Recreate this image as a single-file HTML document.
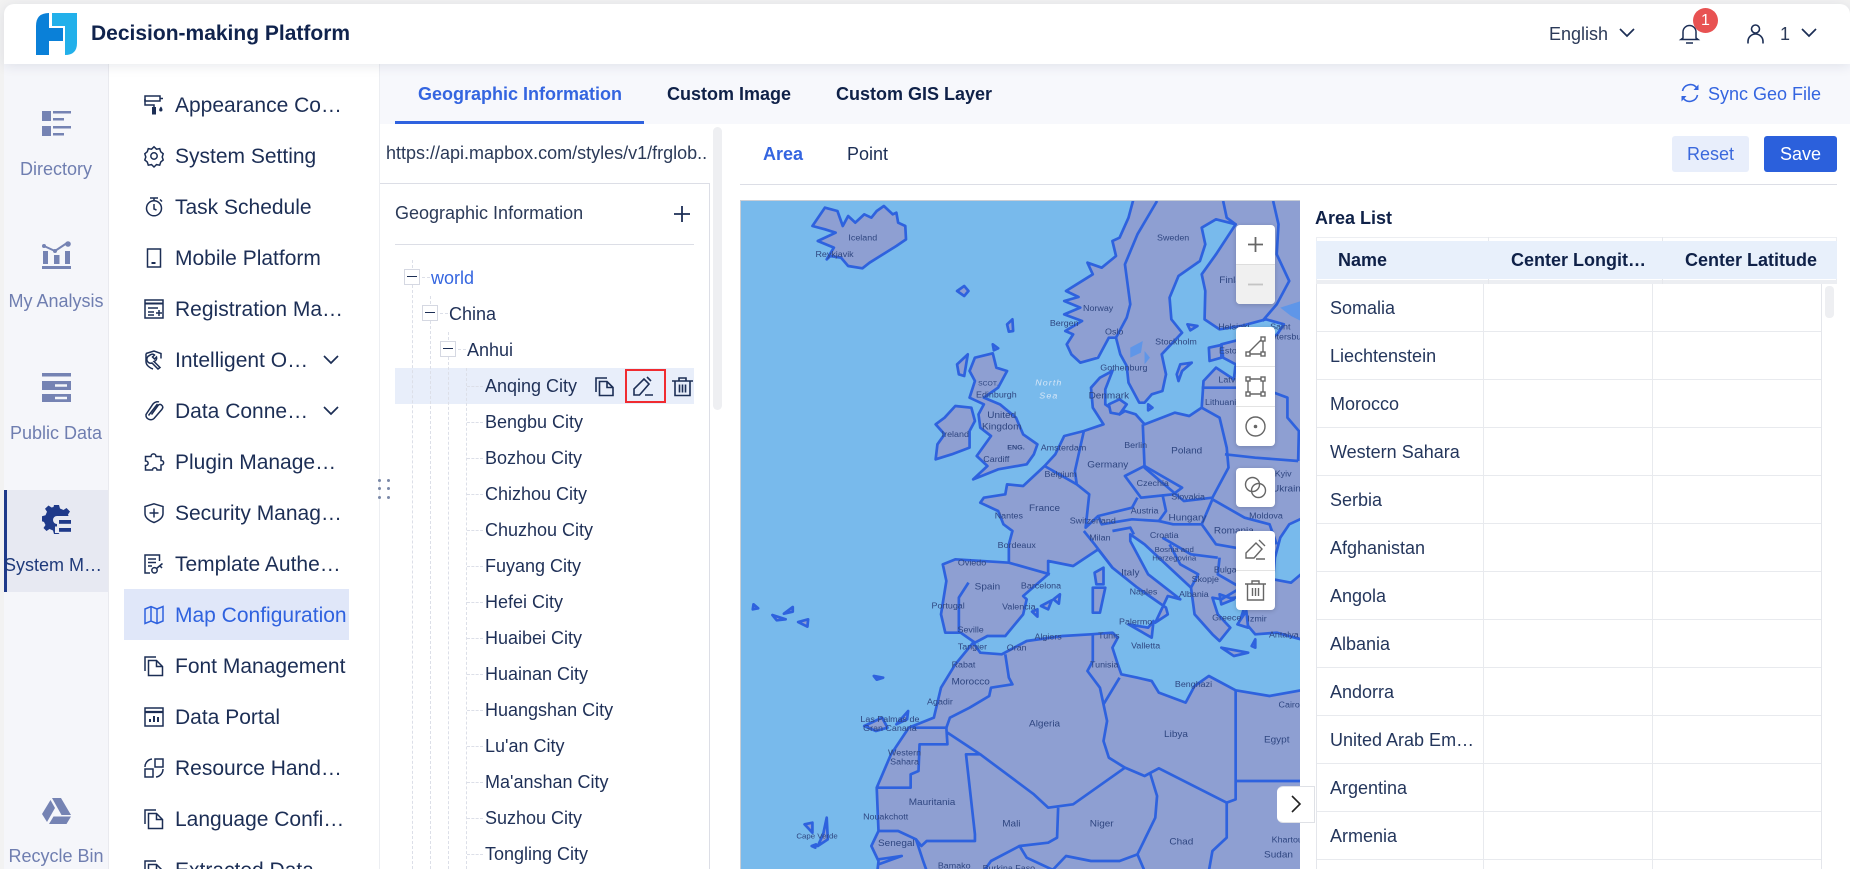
<!DOCTYPE html>
<html lang="en"><head><meta charset="utf-8"><title>Decision-making Platform</title>
<style>
html,body{margin:0;padding:0;width:1850px;height:869px;overflow:hidden;background:#f2f2f2;font-family:"Liberation Sans",Arial,sans-serif;color:#1c2e55}
*{box-sizing:border-box}
#root{position:relative;width:1850px;height:869px;overflow:hidden}
.a{position:absolute}
.t{position:absolute;white-space:nowrap;line-height:24px;height:24px;transform:translateY(-12px)}
.s{font-size:21px;left:175px;color:#1c2e55}
.r{font-size:18px;color:#6f7eb0;left:4px;width:104px;text-align:center}
.n{font-size:18px;color:#1f3057}
.c{font-size:18px;color:#24365c;left:1330px}
.b{font-weight:bold;font-size:18px;color:#0f2148}
svg{position:absolute;overflow:visible;display:block}
.i{left:144px;width:20px;height:20px;fill:none;stroke:#1c2e55;stroke-width:1.5}
.ln{fill:none;stroke:#2e62de;stroke-width:2.7;stroke-linejoin:round}
.ln path{vector-effect:non-scaling-stroke}
.mp text{font-family:"Liberation Sans",Arial,sans-serif;font-size:25px;fill:#2f4680;text-anchor:middle}
.ctl{position:absolute;left:1236px;width:39px;background:#fff;border-radius:4px;box-shadow:0 1px 5px rgba(0,0,0,.18)}
.ctl svg{left:8px;width:23px;height:23px;fill:none;stroke:#666;stroke-width:1.4}
.v{position:absolute;width:0;border-left:1.5px dashed #dcdfe8}
.h{position:absolute;height:0;border-top:1.5px dashed #dcdfe8}
.bx{position:absolute;width:16px;height:16px;border:1.5px solid #d5d8e2;background:#fff}
.bx:after{content:"";position:absolute;left:2px;right:2px;top:5.5px;height:1.5px;background:#1c2e55}
</style></head><body>
<div id="root">

<!-- header -->
<div class="a" style="left:4px;top:4px;width:1846px;height:60px;background:#fff;border-radius:10px 10px 0 0;z-index:5;box-shadow:0 2px 12px rgba(30,40,80,.10)"></div>
<svg style="left:36px;top:13px;width:42px;height:42px;z-index:6" viewBox="0 0 42 42">
<path d="M13 0Q0 0 0 13V42H13V28H27V15H13Z" fill="#0a80d8"/>
<path d="M16 0H41V30Q41 42 29 42V13H16Z" fill="#22b0ea"/>
</svg>
<div class="t" style="left:91px;top:34px;font-size:21px;font-weight:bold;color:#10234d;z-index:6">Decision-making Platform</div>
<div class="t" style="left:1549px;top:34px;font-size:18px;color:#2b3a58;z-index:6">English</div>
<svg style="left:1619px;top:28px;width:16px;height:10px;z-index:6;fill:none;stroke:#1c2e55;stroke-width:1.7" viewBox="0 0 16 10"><path d="M1 1l7 7 7-7"/></svg>
<svg style="left:1680px;top:24px;width:19px;height:20px;z-index:6;fill:none;stroke:#1c2e55;stroke-width:1.5" viewBox="0 0 19 20"><path d="M3 14V8a6.500 6.500 0 0 1 13 0v6l2 1.500H1zM6 19h7"/></svg>
<div class="a" style="left:1693px;top:8px;width:25px;height:25px;border-radius:50%;background:#e85252;color:#fff;font-size:16px;line-height:25px;text-align:center;z-index:7">1</div>
<svg style="left:1747px;top:24px;width:17px;height:20px;z-index:6;fill:none;stroke:#1c2e55;stroke-width:1.6" viewBox="0 0 17 20"><circle cx="8.500" cy="5" r="4"/><path d="M1 19.500v-2a7.500 7.500 0 0 1 15 0v2"/></svg>
<div class="t" style="left:1780px;top:34px;font-size:18px;color:#2b3a58;z-index:6">1</div>
<svg style="left:1801px;top:28px;width:16px;height:10px;z-index:6;fill:none;stroke:#1c2e55;stroke-width:1.7" viewBox="0 0 16 10"><path d="M1 1l7 7 7-7"/></svg>

<!-- left rail -->
<div class="a" style="left:4px;top:64px;width:105px;height:805px;background:#f5f6fa;border-right:1px solid #e9eaef"></div>
<div class="a" style="left:4px;top:490px;width:104px;height:102px;background:#e7e9f2"></div>
<div class="a" style="left:4px;top:490px;width:3px;height:102px;background:#1f3a8a"></div>
<svg style="left:42px;top:111px;width:29px;height:25px;fill:#7583b3" viewBox="0 0 29 25"><rect width="9" height="10"/><rect y="15" width="9" height="10"/><rect x="11" width="18" height="2.500"/><rect x="11" y="7" width="11" height="2.500"/><rect x="11" y="15" width="18" height="2.500"/><rect x="11" y="22" width="11" height="2.500"/></svg>
<div class="t r" style="top:169px">Directory</div>
<svg style="left:42px;top:241px;width:29px;height:28px;fill:#7583b3" viewBox="0 0 29 28"><rect x="1" y="10" width="5" height="13"/><rect x="12" y="14" width="5.500" height="9"/><rect x="23" y="10" width="5" height="13"/><rect y="25" width="29" height="3"/><path d="M2 5l11 5 12-8" fill="none" stroke="#7583b3" stroke-width="2"/><circle cx="2" cy="5" r="2"/><circle cx="13" cy="10" r="2"/><circle cx="26" cy="3" r="2.800"/></svg>
<div class="t r" style="top:301px">My Analysis</div>
<svg style="left:42px;top:373px;width:29px;height:29px;fill:#7583b3" viewBox="0 0 29 29"><rect width="29" height="3.500"/><path d="M0 21h29v8H0zM13 23.800v2.400h12v-2.400z" fill-rule="evenodd"/><path d="M0 8h29v9H0zM13 11.300v2.400h12v-2.400z" fill-rule="evenodd"/></svg>
<div class="t r" style="top:433px">Public Data</div>
<svg style="left:42px;top:505px;width:29px;height:29px" viewBox="0 0 29 29"><path d="M12 0h5l1 3.500 3.500 1.500 3-2 3.500 3.500-2 3 .5 1.500H15a4 4 0 1 0 0 8v2.500h-2v6.500h4.500l-1 1h-4.500l-1-3.500-3.500-1.500-3 2L1.500 23l2-3L2 17l-2-.8v-5l3.500-1 1.500-3.500-2-3L6.500 0.500l3 2L11.500 2z" fill="#1f3a8a"/><rect x="17" y="15" width="12" height="3.800" fill="#1f3a8a"/><rect x="17" y="23" width="12" height="3.800" fill="#1f3a8a"/></svg>
<div class="t" style="left:4px;top:565px;font-size:18px;color:#1f3a7a">System M…</div>
<svg style="left:42px;top:798px;width:29px;height:26px;fill:#7583b3" viewBox="0 0 29 26"><path d="M10 0h9l10 17h-9.500zM8.500 2l4.500 8L5 24 0 16zM7 26l4.500-7.500H29l-4.500 7.500z"/></svg>
<div class="t r" style="top:856px">Recycle Bin</div>

<!-- second nav -->
<div class="a" style="left:109px;top:64px;width:271px;height:805px;background:#fff;border-right:1px solid #eceef2"></div>
<div class="a" style="left:124px;top:589px;width:225px;height:51px;background:#e0e7f9"></div>

<svg class="i" style="top:95px" viewBox="0 0 20 20"><path d="M1 1h15v5H1zM16 3.500h3"/><path d="M1 4v6h9v2"/><rect x="8" y="12" width="4" height="7.500" fill="#1c2e55" stroke="none"/><path d="M17 11.500c2 2.500 2 5-.2 5s-2.200-2.500.2-5z" fill="#1c2e55" stroke="none"/></svg>
<div class="t s" style="top:106px">Appearance Co…</div>
<svg class="i" style="top:146px" viewBox="0 0 20 20"><path d="M10 .8l2.500 2.400 3.200-.6 1 3.100 2.500 2.100-1 3.200 1 3-2.500 2.100-1 3.100-3.200-.6-2.500 2.400-2.500-2.400-3.200.6-1-3.100-2.500-2.100 1-3-1-3.200 2.500-2.100 1-3.100 3.200.6z"/><circle cx="10" cy="10" r="3.200"/></svg>
<div class="t s" style="top:157px">System Setting</div>
<svg class="i" style="top:197px" viewBox="0 0 20 20"><circle cx="10" cy="11.300" r="7.500"/><path d="M6 1h8M10 1v2.500M10 7v5l2.500 1M16 2.500l2 2"/></svg>
<div class="t s" style="top:208px">Task Schedule</div>
<svg class="i" style="top:248px" viewBox="0 0 20 20"><rect x="3.500" y="1" width="13" height="18"/><path d="M7.500 15h4" stroke-width="2"/></svg>
<div class="t s" style="top:259px">Mobile Platform</div>
<svg class="i" style="top:299px" viewBox="0 0 20 20"><rect x="1" y="1" width="18" height="18"/><path d="M1 4.500h18" stroke-width="2"/><path d="M4 9h10M4 13h6M4 16h6M12 14h6M15 11v6"/></svg>
<div class="t s" style="top:310px">Registration Ma…</div>
<svg class="i" style="top:350px" viewBox="0 0 20 20"><path d="M2 3.500L10 1l7 2.500v5M2 3.500v8c0 4 4 6.500 7 7.500"/><path d="M5.500 5.500a3.500 3.500 0 0 1 5-.5l-2 2 2 2 2-2a3.500 3.500 0 0 1-2.500 4.500l6 6-2 1.500-6-6a3.500 3.500 0 0 1-2.500-7.500z"/></svg>
<div class="t s" style="top:361px">Intelligent O…</div>
<svg style="left:323px;top:355px;width:16px;height:10px;fill:none;stroke:#1c2e55;stroke-width:1.7" viewBox="0 0 16 10"><path d="M1 1l7 7 7-7"/></svg>
<svg class="i" style="top:401px" viewBox="0 0 20 20"><path d="M7.500 13.500L14 4.500c1.500-2 3-1 4 0s1 2.500-.2 4L10 17.500c-2.500 2.500-8.500 1-8-4L9 3c2-2.500 5-2.500 6-2"/><path d="M4.500 14.500l9-11.500"/></svg>
<div class="t s" style="top:412px">Data Conne…</div>
<svg style="left:323px;top:406px;width:16px;height:10px;fill:none;stroke:#1c2e55;stroke-width:1.7" viewBox="0 0 16 10"><path d="M1 1l7 7 7-7"/></svg>
<svg class="i" style="top:452px" viewBox="0 0 20 20"><path d="M7 4.500C7 1 12 1 12 4.500h5v4c3.500 0 3.500 4.500 0 4.500v5H13c0-3-4.500-3-4.500 0H1.500v-4.500C5 13.500 5 9 1.500 9V4.500z"/></svg>
<div class="t s" style="top:463px">Plugin Manage…</div>
<svg class="i" style="top:503px" viewBox="0 0 20 20"><path d="M10 .8L19 3.500v7c0 4.500-5 7.500-9 9-4-1.500-9-4.500-9-9v-7zM5.500 10h9M10 5.500v9"/></svg>
<div class="t s" style="top:514px">Security Manag…</div>
<svg class="i" style="top:554px" viewBox="0 0 20 20"><path d="M15.500 7V1H1v18h5"/><path d="M4 5h8M4 8.500h8M4 12h4"/><circle cx="10.500" cy="16.300" r="2.700"/><path d="M12.500 14.500l6-5M16 12l2 2"/></svg>
<div class="t s" style="top:565px">Template Authe…</div>
<svg class="i" style="top:605px;stroke:#2f62df" viewBox="0 0 20 20"><path d="M1 4l6-2.500 6 2.500 6-2.500v14.500l-6 2.500-6-2.500-6 2.500zM7 1.500v14.500M13 4v14.500"/></svg>
<div class="t s" style="top:616px;color:#2f62df">Map Configuration</div>
<svg class="i" style="top:656px" viewBox="0 0 20 20"><path d="M4.500 4.500h8l6 6v9H4.500zM12.500 4.500v6h6"/><path d="M1 15V1h11"/></svg>
<div class="t s" style="top:667px">Font Management</div>
<svg class="i" style="top:707px" viewBox="0 0 20 20"><rect x="1" y="1" width="18" height="18"/><path d="M1 5h18" stroke-width="2.200"/><path d="M6 15v-3M10 15V9M14 15v-5" stroke-width="2"/></svg>
<div class="t s" style="top:718px">Data Portal</div>
<svg class="i" style="top:758px" viewBox="0 0 20 20"><rect x="11" y="1" width="8" height="8"/><rect x="1" y="11" width="8" height="8"/><path d="M1 9a8 8 0 0 1 7-8M19 11a8 8 0 0 1-7 8"/></svg>
<div class="t s" style="top:769px">Resource Hand…</div>
<svg class="i" style="top:809px" viewBox="0 0 20 20"><path d="M4.500 4.500h8l6 6v9H4.500zM12.500 4.500v6h6"/><path d="M1 15V1h11"/></svg>
<div class="t s" style="top:820px">Language Confi…</div>
<svg class="i" style="top:860px" viewBox="0 0 20 20"><path d="M4.500 4.500h8l6 6v9H4.500zM12.500 4.500v6h6"/><path d="M1 15V1h11"/></svg>
<div class="t s" style="top:871px">Extracted Data</div>

<!-- content -->
<div class="a" style="left:380px;top:64px;width:1470px;height:805px;background:#fff"></div>
<div class="a" style="left:380px;top:64px;width:1470px;height:60px;background:#f7f8fc"></div>
<div class="t b" style="left:418px;top:94px;color:#3465e0">Geographic Information</div>
<div class="a" style="left:395px;top:121px;width:249px;height:3px;background:#2f62df"></div>
<div class="t b" style="left:667px;top:94px">Custom Image</div>
<div class="t b" style="left:836px;top:94px">Custom GIS Layer</div>
<svg style="left:1680px;top:83px;width:20px;height:20px;fill:none;stroke:#3465e0;stroke-width:1.600" viewBox="0 0 20 20"><path d="M2.500 8A8 8 0 0 1 16.500 4.500l1 1.500M17.500 12A8 8 0 0 1 3.500 15.500l-1-1.500"/><path d="M18.500 1.500V7h-5z" fill="#3465e0" stroke="none"/><path d="M1.500 18.500V13h5z" fill="#3465e0" stroke="none"/></svg>
<div class="t" style="left:1708px;top:94px;font-size:18px;color:#3465e0">Sync Geo File</div>

<!-- left tree panel -->
<div class="t" style="left:386px;top:153px;font-size:18px;color:#2b3a58">https://api.mapbox.com/styles/v1/frglob..</div>
<div class="a" style="left:713px;top:127px;width:9px;height:283px;border-radius:5px;background:#eeeff2"></div>
<div class="a" style="left:380px;top:183px;width:330px;height:686px;border-top:1px solid #dcdee6;border-right:1px solid #dcdee6"></div>
<div class="t" style="left:395px;top:213px;font-size:18px;color:#2b3a58">Geographic Information</div>
<svg style="left:674px;top:206px;width:16px;height:16px;fill:none;stroke:#1c2e55;stroke-width:1.800" viewBox="0 0 16 16"><path d="M8 0v16M0 8h16"/></svg>
<div class="a" style="left:395px;top:244px;width:299px;height:1px;background:#dcdee6"></div>
<div class="a" style="left:395px;top:368px;width:299px;height:36px;background:#e8eefa"></div>

<div class="v" style="left:412px;top:260px;height:609px"></div>
<div class="v" style="left:430px;top:296px;height:573px"></div>
<div class="v" style="left:448px;top:332px;height:537px"></div>
<div class="v" style="left:466px;top:368px;height:501px"></div>
<div class="bx" style="left:404px;top:269px"></div><div class="h" style="left:422px;top:277px;width:8px"></div>
<div class="t n" style="left:431px;top:278px;color:#3566e0">world</div>
<div class="bx" style="left:422px;top:305px"></div><div class="h" style="left:440px;top:313px;width:8px"></div>
<div class="t n" style="left:449px;top:314px">China</div>
<div class="bx" style="left:440px;top:341px"></div><div class="h" style="left:458px;top:349px;width:8px"></div>
<div class="t n" style="left:467px;top:350px">Anhui</div>

<div class="h" style="left:467px;top:386px;width:16px"></div><div class="t n" style="left:485px;top:386px">Anqing City</div>
<div class="h" style="left:467px;top:422px;width:16px"></div><div class="t n" style="left:485px;top:422px">Bengbu City</div>
<div class="h" style="left:467px;top:458px;width:16px"></div><div class="t n" style="left:485px;top:458px">Bozhou City</div>
<div class="h" style="left:467px;top:494px;width:16px"></div><div class="t n" style="left:485px;top:494px">Chizhou City</div>
<div class="h" style="left:467px;top:530px;width:16px"></div><div class="t n" style="left:485px;top:530px">Chuzhou City</div>
<div class="h" style="left:467px;top:566px;width:16px"></div><div class="t n" style="left:485px;top:566px">Fuyang City</div>
<div class="h" style="left:467px;top:602px;width:16px"></div><div class="t n" style="left:485px;top:602px">Hefei City</div>
<div class="h" style="left:467px;top:638px;width:16px"></div><div class="t n" style="left:485px;top:638px">Huaibei City</div>
<div class="h" style="left:467px;top:674px;width:16px"></div><div class="t n" style="left:485px;top:674px">Huainan City</div>
<div class="h" style="left:467px;top:710px;width:16px"></div><div class="t n" style="left:485px;top:710px">Huangshan City</div>
<div class="h" style="left:467px;top:746px;width:16px"></div><div class="t n" style="left:485px;top:746px">Lu'an City</div>
<div class="h" style="left:467px;top:782px;width:16px"></div><div class="t n" style="left:485px;top:782px">Ma'anshan City</div>
<div class="h" style="left:467px;top:818px;width:16px"></div><div class="t n" style="left:485px;top:818px">Suzhou City</div>
<div class="h" style="left:467px;top:854px;width:16px"></div><div class="t n" style="left:485px;top:854px">Tongling City</div>

<svg style="left:595px;top:377px;width:19px;height:19px;fill:none;stroke:#1c2e55;stroke-width:1.600" viewBox="0 0 19 19"><path d="M4.500 4.500h7.500l6 6v8H4.500zM12 4.500v6h6"/><path d="M1 15V1h11"/></svg>
<div class="a" style="left:625px;top:369px;width:41px;height:34px;border:2.500px solid #f02b30"></div>
<svg style="left:633px;top:377px;width:21px;height:19px;fill:none;stroke:#1c2e55;stroke-width:1.600" viewBox="0 0 21 19"><path d="M1 12L11 2l5 5L6.500 18H1zM14 0l4 4M12 18h8"/></svg>
<svg style="left:672px;top:377px;width:21px;height:19px;fill:none;stroke:#1c2e55;stroke-width:1.600" viewBox="0 0 21 19"><path d="M0 4h21M7 4V1h7v3M3 4v14.500h15V4M7.500 7.500v8M10.500 7.500v8M13.500 7.500v8"/></svg>
<div class="a" style="left:378px;top:479px;width:3px;height:3px;background:#7b89a8;border-radius:50%"></div>
<div class="a" style="left:378px;top:487px;width:3px;height:3px;background:#7b89a8;border-radius:50%"></div>
<div class="a" style="left:378px;top:496px;width:3px;height:3px;background:#7b89a8;border-radius:50%"></div>
<div class="a" style="left:387px;top:479px;width:3px;height:3px;background:#7b89a8;border-radius:50%"></div>
<div class="a" style="left:387px;top:487px;width:3px;height:3px;background:#7b89a8;border-radius:50%"></div>
<div class="a" style="left:387px;top:496px;width:3px;height:3px;background:#7b89a8;border-radius:50%"></div>

<!-- right panel header -->
<div class="t b" style="left:763px;top:154px;color:#3465e0">Area</div>
<div class="t" style="left:847px;top:154px;font-size:18px;color:#1c2e55">Point</div>
<div class="a" style="left:1672px;top:136px;width:77px;height:36px;border-radius:3px;background:#e8eefb;color:#3a68dc;font-size:18px;line-height:36px;text-align:center">Reset</div>
<div class="a" style="left:1764px;top:136px;width:73px;height:36px;border-radius:3px;background:#2b60dc;color:#fff;font-size:18px;line-height:36px;text-align:center">Save</div>
<div class="a" style="left:740px;top:184px;width:1097px;height:1px;background:#dcdee6"></div>

<!-- map -->
<div class="a" style="left:740px;top:200px;width:560px;height:669px;overflow:hidden;background:#78baec;border-top:1px solid #c9ced6;border-left:1px solid #c9ced6">
<svg class="mp" style="left:0;top:0;width:560px;height:669px" viewBox="0 0 1568 2007" preserveAspectRatio="none">
<g transform="translate(0,-30)">
<g class="ln" style="fill:#8e9fd2">
<path d="M200,105L235,50L270,60L285,105L300,75L320,95L345,70L365,80L380,60L400,45L425,70L435,65L440,95L460,105L462,145L435,165L390,195L360,215L340,232L300,225L280,200L250,195L240,205L260,170L215,150L265,125L235,115Z"/>
<path d="M605,300L625,285L637,300L625,315Z"/><path d="M745,400L760,385L762,420L750,422Z"/><path d="M705,460L720,472L708,478Z"/>
<path d="M655,500L705,487L715,530L745,540L720,590L680,620L725,640L770,680L790,730L830,760L820,790L800,820L720,835L650,865L690,825L660,795L700,735L670,710L665,670L680,640L640,620L655,570L640,540Z"/>
<path d="M605,520L635,490L625,555L610,550Z"/>
<path d="M600,645L645,650L655,690L640,720L640,770L590,790L545,805L550,760L570,730L545,700L570,680Z"/>
<path d="M1100,20L1085,80L1060,140L1040,150L1050,195L1010,230L970,215L985,250L940,280L910,300L945,318L905,330L950,350L905,370L955,390L908,420L930,430L912,460L925,490L950,515L1000,500L1030,440L1050,440L1062,490L1080,525L1085,575L1115,635L1130,635L1150,610L1180,600L1190,550L1178,490L1235,425L1205,385L1200,320L1225,255L1285,210L1300,160L1290,110L1330,85L1385,100L1330,190L1290,250L1300,300L1298,385L1340,415L1400,405L1470,385L1520,400L1500,432L1400,445L1345,460L1350,500L1385,520L1380,565L1330,530L1295,570L1290,650L1255,675L1215,665L1130,700L1105,670L1075,660L1060,670L1020,640L1020,595L1040,540L1005,560L980,590L985,650L1015,700L960,720L905,735L880,790L850,825L790,885L745,880L740,910L680,920L670,935L720,960L735,1000L760,1020L750,1060L750,1115L600,1105L565,1120L575,1170L560,1270L572,1325L615,1325L655,1355L690,1335L740,1335L790,1270L800,1225L790,1215L860,1150L860,1110L930,1125L1000,1075L1040,1130L1110,1190L1190,1250L1195,1270L1160,1295L1195,1215L1230,1225L1140,1150L1090,1050L1090,1030L1130,1060L1190,1120L1260,1190L1270,1270L1320,1330L1340,1350L1370,1310L1335,1270L1320,1220L1345,1225L1420,1215L1400,1280L1440,1330L1500,1325L1568,1345L1620,1345L1620,20Z"/>
<path d="M1535,1000L1510,1040L1495,1100L1490,1165L1540,1175L1568,1150L1620,1145L1620,970L1565,985Z" style="fill:#78baec"/>
<path d="M1220,550L1230,520L1262,515L1235,540L1225,570Z"/><path d="M1310,470L1345,462L1345,500L1312,510Z"/>
<path d="M1250,400L1278,405L1258,418Z"/><path d="M1140,640L1152,650L1140,658Z"/>
<path d="M1030,640L1060,625L1080,640L1060,670L1035,665Z"/>
<!-- Africa -->
<path d="M650,1355L670,1385L730,1390L800,1350L900,1335L980,1330L1040,1325L1055,1340L1040,1370L1055,1420L1065,1450L1110,1460L1150,1470L1170,1505L1245,1535L1270,1485L1310,1455L1385,1498L1480,1515L1568,1498L1620,1490L1620,2060L380,2060L385,2010L365,1965L385,1920L380,1790L420,1690L470,1610L540,1580L560,1490L600,1420Z"/>
<!-- islands -->
<path d="M35,1240L48,1252L33,1255Z"/><path d="M88,1272L125,1285L100,1288Z"/><path d="M120,1268L145,1248L145,1262Z"/><path d="M160,1293L188,1285L186,1307Z"/>
<path d="M372,1455L398,1460L380,1466Z"/>
<path d="M345,1605L375,1590L395,1580L410,1610L378,1620Z"/><path d="M435,1600L468,1560L465,1585Z"/>
<path d="M178,1900L200,1895L200,1925Z"/><path d="M230,1930L240,1880L243,1945L215,1965Z"/><path d="M198,1965L210,1960L208,1970Z"/>
<path d="M840,1245L870,1228L860,1255Z"/><path d="M875,1225L893,1210L890,1238Z"/><path d="M815,1262L830,1255L830,1277Z"/>
<path d="M990,1145L1015,1130L1015,1180L995,1180Z"/><path d="M985,1190L1020,1190L1005,1265L985,1265Z"/>
<path d="M1085,1300L1140,1310L1155,1290L1150,1340Z"/>
<path d="M1345,1370L1420,1385L1380,1395Z"/><path d="M1430,1365L1440,1345L1440,1370Z"/>
<path d="M1340,1210L1380,1225L1345,1240Z"/><path d="M1390,1300L1415,1260L1420,1310Z"/>
</g>
<g class="ln">
<!-- Europe borders -->
<path d="M1165,30L1110,130L1075,220L1090,340L1080,380L1050,440"/>
<path d="M1350,30L1360,80L1385,100"/>
<path d="M1490,30L1505,100L1500,190L1535,270L1500,340L1460,390"/>
<path d="M1290,590L1390,590M1290,650L1340,680L1360,770L1365,830L1320,920L1240,930L1130,830L1125,700"/>
<path d="M1355,790L1440,800L1560,810M1480,600L1530,620L1530,680L1562,720L1560,810"/>
<path d="M1075,855L1130,825L1235,890L1210,910L1120,920Z"/>
<path d="M960,720L935,840L940,880L850,825M940,880L975,910L965,1010L1000,975L1095,950L1110,920M1000,975L1010,1000L1095,985L1170,990L1190,960L1180,910"/>
<path d="M1320,925L1290,1000L1210,1000L1170,990M1320,925L1410,980L1480,1000L1500,1060M1290,1000L1330,1060L1490,1090"/>
<path d="M960,1020L990,1060L1040,1130M1100,1030L1090,1010L1040,1020"/>
<path d="M750,1115L865,1150M637,1175L610,1220L610,1325"/>
<path d="M1340,1100L1335,1150L1400,1190L1345,1225M1180,1040L1260,1090L1335,1100M1200,1060L1230,1120L1280,1150L1260,1190"/>
<!-- Africa borders -->
<path d="M740,1390L750,1460L760,1480L700,1490L695,1515L640,1550L585,1580L575,1610L480,1610"/>
<path d="M575,1610L578,1660L500,1660L497,1740L475,1750L475,1790L380,1790"/>
<path d="M578,1625L670,1690L630,1690L655,1930L655,1950L520,1950L505,1965L490,1945L440,1920L385,1920"/>
<path d="M670,1690L820,1810L860,1850L930,1840L1075,1730"/>
<path d="M985,1330L985,1410L970,1440L1005,1490L1015,1540L1025,1590L1015,1650L1030,1700L1075,1730"/>
<path d="M1015,1540L1060,1460"/>
<path d="M1075,1730L1130,1755L1170,1732L1360,1835L1385,1825L1385,1500"/>
<path d="M1385,1770L1620,1770"/>
<path d="M1145,1745L1165,1815L1160,1880L1110,1990L1130,2040"/>
<path d="M1360,1835L1360,1940L1320,1980L1310,2040"/>
<path d="M888,1850L885,1940L860,1955L780,1965L800,2000L880,2040"/>
<path d="M780,1965L700,2010L680,2040"/>
<path d="M870,2040L910,1995L980,2010L1060,2010L1110,1990"/>
<path d="M490,1945L510,2010L520,2040"/>
<path d="M385,2005L450,1995L385,2020"/>
</g>
<!-- lakes -->
<path d="M1090,470L1125,450L1120,485L1090,500Z" fill="#5f96e8"/><path d="M1130,480L1145,500L1130,520Z" fill="#5f96e8"/>
<path d="M1510,350L1568,330L1568,390L1540,375Z" fill="#5f96e8"/>
<text x="341" y="148">Iceland</text><text x="262" y="198">Reykjavik</text><text x="1210" y="148">Sweden</text><text x="1000" y="360">Norway</text><text x="905" y="405">Bergen</text><text x="1045" y="430">Oslo</text><text x="1218" y="460">Stockholm</text><text x="1072" y="538">Gothenburg</text><text x="1030" y="622" style="font-size:28px">Denmark</text>
<text x="862" y="583" style="fill:#d5e6f7;font-style:italic;letter-spacing:3px">North</text><text x="862" y="623" style="fill:#d5e6f7;font-style:italic;letter-spacing:3px">Sea</text>
<text x="692" y="584" style="font-size:19px">SCOT.</text><text x="715" y="620">Edinburgh</text><text x="730" y="681" style="font-size:28px">United</text><text x="730" y="716" style="font-size:28px">Kingdom</text><text x="600" y="738">Ireland</text><text x="770" y="775" style="font-size:20px;font-weight:bold">ENG.</text><text x="715" y="813">Cardiff</text><text x="903" y="778">Amsterdam</text><text x="1105" y="771">Berlin</text><text x="1027" y="830" style="font-size:28px">Germany</text><text x="1248" y="788" style="font-size:28px">Poland</text><text x="895" y="858">Belgium</text><text x="1153" y="885">Czechia</text><text x="1252" y="925">Slovakia</text><text x="1518" y="856">Kyiv</text><text x="1535" y="901" style="font-size:28px">Ukraine</text><text x="850" y="960" style="font-size:28px">France</text><text x="750" y="983">Nantes</text><text x="985" y="998">Switzerland</text><text x="1130" y="968">Austria</text><text x="1250" y="988" style="font-size:28px">Hungary</text><text x="1470" y="983">Moldova</text><text x="1350" y="642">Lithuania</text><text x="1370" y="575">Latvia</text><text x="1380" y="488">Estonia</text><text x="1380" y="415">Helsinki</text><text x="1510" y="415">Saint</text><text x="1530" y="445">Petersburg</text><text x="1385" y="276" style="font-size:28px">Finland</text><text x="1380" y="1028" style="font-size:28px">Romania</text>
<text x="772" y="1071">Bordeaux</text><text x="1005" y="1048">Milan</text><text x="1185" y="1041">Croatia</text><text x="1213" y="1083" style="font-size:22px">Bosnia and</text><text x="1213" y="1108" style="font-size:22px">Herzegovina</text><text x="647" y="1123">Oviedo</text><text x="690" y="1195" style="font-size:28px">Spain</text><text x="840" y="1193">Barcelona</text><text x="580" y="1253">Portugal</text><text x="778" y="1256">Valencia</text><text x="643" y="1325">Seville</text><text x="1090" y="1153" style="font-size:28px">Italy</text><text x="1127" y="1211">Naples</text><text x="1268" y="1218">Albania</text><text x="1300" y="1173">Skopje</text><text x="1370" y="1145">Bulgaria</text><text x="1105" y="1300">Palermo</text><text x="1360" y="1288">Greece</text><text x="1445" y="1291">Izmir</text><text x="1520" y="1340">Antalya</text><text x="860" y="1346">Algiers</text><text x="648" y="1376">Tangier</text><text x="772" y="1378">Oran</text><text x="623" y="1430">Rabat</text><text x="1030" y="1343">Tunis</text><text x="1017" y="1429">Tunisia</text><text x="1133" y="1373">Valletta</text><text x="643" y="1481" style="font-size:28px">Morocco</text><text x="1267" y="1488">Benghazi</text><text x="557" y="1540">Agadir</text><text x="1535" y="1550">Cairo</text><text x="850" y="1606" style="font-size:28px">Algeria</text><text x="417" y="1593">Las Palmas de</text><text x="417" y="1620">Gran Canaria</text><text x="1218" y="1638" style="font-size:28px">Libya</text><text x="1500" y="1655" style="font-size:28px">Egypt</text><text x="458" y="1694">Western</text><text x="458" y="1721">Sahara</text><text x="535" y="1842" style="font-size:28px">Mauritania</text><text x="757" y="1906" style="font-size:28px">Mali</text><text x="1010" y="1906" style="font-size:28px">Niger</text><text x="405" y="1886">Nouakchott</text><text x="1233" y="1960" style="font-size:28px">Chad</text><text x="213" y="1943" style="font-size:22px">Cape Verde</text><text x="435" y="1965" style="font-size:28px">Senegal</text><text x="1540" y="1955">Khartoum</text><text x="1505" y="2000" style="font-size:28px">Sudan</text><text x="597" y="2032">Bamako</text><text x="750" y="2040">Burkina Faso</text>
</g></svg>
</div>

<!-- map controls -->
<div class="ctl" style="top:225px;height:79px">
<svg style="top:8px" viewBox="0 0 23 23"><path d="M11.500 4v15M4 11.500h15" stroke-width="1.800"/></svg>
<div class="a" style="left:0;top:39px;width:39px;height:40px;background:#f0f0f0;border-top:1px solid #ddd;border-radius:0 0 4px 4px"></div>
<svg style="top:48px" viewBox="0 0 23 23"><path d="M4 11.500h15" stroke="#c4c4c4" stroke-width="1.800"/></svg>
</div>
<div class="ctl" style="top:327px;height:119px">
<svg style="top:8px" viewBox="0 0 23 23"><rect x="2" y="17" width="4" height="4"/><rect x="17" y="17" width="4" height="4"/><rect x="17" y="2" width="4" height="4"/><path d="M6 19h11M19 17V6M5 17L17 5"/></svg>
<div class="a" style="left:0;top:39px;width:39px;height:1px;background:#e3e3e3"></div>
<svg style="top:48px" viewBox="0 0 23 23"><rect x="2" y="2" width="4" height="4"/><rect x="17" y="2" width="4" height="4"/><rect x="2" y="17" width="4" height="4"/><rect x="17" y="17" width="4" height="4"/><path d="M6 4h11M6 19h11M4 6v11M19 6v11"/></svg>
<div class="a" style="left:0;top:79px;width:39px;height:1px;background:#e3e3e3"></div>
<svg style="top:88px" viewBox="0 0 23 23"><circle cx="11.500" cy="11.500" r="9.500"/><circle cx="11.500" cy="11.500" r="1.800" fill="#666" stroke="none"/></svg>
</div>
<div class="ctl" style="top:468px;height:39px">
<svg style="top:8px" viewBox="0 0 23 23"><circle cx="8.500" cy="8.500" r="7"/><circle cx="14.500" cy="14.500" r="7"/></svg>
</div>
<div class="ctl" style="top:531px;height:79px">
<svg style="top:8px" viewBox="0 0 23 23"><path d="M2 14L12 4l6 6-8 9H2zM15 1l6 6M12 20h9"/></svg>
<div class="a" style="left:0;top:39px;width:39px;height:1px;background:#e3e3e3"></div>
<svg style="top:48px" viewBox="0 0 23 23"><path d="M1 5h21M8 5V2h7v3M3.500 5v16h16V5M8.500 9v8M11.500 9v8M14.500 9v8"/></svg>
</div>
<div class="a" style="left:1277px;top:786px;width:38px;height:37px;background:#fff;border:1px solid #dfe1e6;border-left:none;border-radius:6px 0 0 6px;z-index:3"></div>
<svg style="left:1291px;top:795px;width:10px;height:18px;fill:none;stroke:#222;stroke-width:1.600;z-index:4" viewBox="0 0 10 18"><path d="M1 1l8 8-8 8"/></svg>

<!-- table -->
<div class="t b" style="left:1315px;top:218px">Area List</div>
<div class="a" style="left:1316px;top:237px;width:521px;height:47px;background:#fff;border:1px solid #eceef2;border-bottom:4px solid #eceef2"></div>
<div class="a" style="left:1488px;top:237px;width:1px;height:47px;background:#e6e8ec"></div>
<div class="a" style="left:1662px;top:237px;width:1px;height:47px;background:#e6e8ec"></div>
<div class="a" style="left:1316px;top:241px;width:521px;height:38px;background:#e8f0fb"></div>
<div class="t b" style="left:1338px;top:260px">Name</div>
<div class="t b" style="left:1511px;top:260px">Center Longit…</div>
<div class="t b" style="left:1685px;top:260px">Center Latitude</div>

<div class="a" style="left:1316px;top:284px;width:506px;height:585px;border-left:1px solid #e4e6eb;border-right:1px solid #e4e6eb;background:repeating-linear-gradient(to bottom,transparent 0,transparent 47px,#e8eaee 47px,#e8eaee 48px);background-position:0 0"></div>
<div class="a" style="left:1483px;top:284px;width:1px;height:585px;background:#e8eaee"></div>
<div class="a" style="left:1652px;top:284px;width:1px;height:585px;background:#e8eaee"></div>
<div class="a" style="left:1825px;top:286px;width:9px;height:32px;border-radius:4px;background:#eeeff2"></div>
<div class="t c" style="top:308px">Somalia</div>
<div class="t c" style="top:356px">Liechtenstein</div>
<div class="t c" style="top:404px">Morocco</div>
<div class="t c" style="top:452px">Western Sahara</div>
<div class="t c" style="top:500px">Serbia</div>
<div class="t c" style="top:548px">Afghanistan</div>
<div class="t c" style="top:596px">Angola</div>
<div class="t c" style="top:644px">Albania</div>
<div class="t c" style="top:692px">Andorra</div>
<div class="t c" style="top:740px">United Arab Em…</div>
<div class="t c" style="top:788px">Argentina</div>
<div class="t c" style="top:836px">Armenia</div>
</div>
</body></html>
